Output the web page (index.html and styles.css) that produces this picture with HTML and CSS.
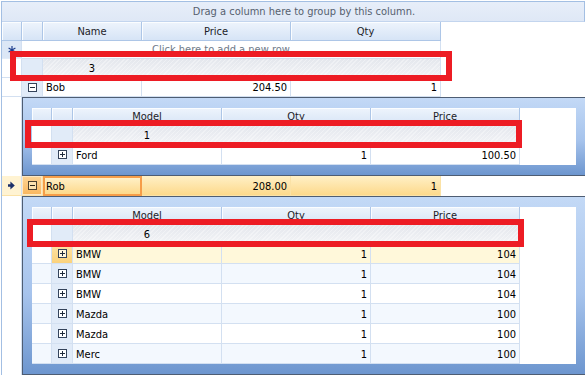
FILE: index.html
```html
<!DOCTYPE html>
<html>
<head>
<meta charset="utf-8">
<link rel="stylesheet" href="styles.css">
</head>
<body>
<div class="page">
  <div class="grid">
    <div class="group-panel">Drag a column here to group by this column.</div>

    <div class="row hrow">
      <div class="c hdr w-ind"></div>
      <div class="c hdr w-exp"></div>
      <div class="c hdr w-name">Name</div>
      <div class="c hdr w-price">Price</div>
      <div class="c hdr w-qty">Qty</div>
    </div>

    <div class="row newrow">
      <div class="c w-ind newind">
        <svg width="8" height="8" viewBox="0 0 8 8"><path d="M4 0v8M0.6 2l6.8 4M0.6 6l6.8-4" stroke="#1f3f8f" stroke-width="1.2" fill="none"/></svg>
      </div>
      <div class="c newtext">Click here to add a new row</div>
    </div>

    <div class="row mgrow">
      <div class="c w-ind"></div>
      <div class="c w-exp expbg"></div>
      <div class="c hatch w-mhatch"><span class="gval w-gname">3</span></div>
    </div>

    <div class="row drow">
      <div class="c w-ind"></div>
      <div class="c w-exp expbg"><svg class="ebox" width="9" height="9" viewBox="0 0 9 9"><rect x="0.5" y="0.5" width="8" height="8" fill="#fff" stroke="#34435a"/><path d="M2 4.5h5" stroke="#1f2b3c"/></svg></div>
      <div class="c w-name txt">Bob</div>
      <div class="c w-price num">204.50</div>
      <div class="c w-qty num">1</div>
    </div>

    <div class="detail">
      <div class="ind-col"></div>
      <div class="frame">
        <div class="panel">
          <div class="row ihrow">
            <div class="c hdr w-ind"></div>
            <div class="c hdr w-exp"></div>
            <div class="c hdr w-col">Model</div>
            <div class="c hdr w-col">Qty</div>
            <div class="c hdr w-col">Price</div>
          </div>
          <div class="row igrow">
            <div class="c w-ind"></div>
            <div class="c w-exp expbg"></div>
            <div class="c hatch w-ihatch"><span class="gval w-gcol">1</span></div>
          </div>
          <div class="row irow">
            <div class="c w-ind"></div>
            <div class="c w-exp expbg"><svg width="9" height="9" viewBox="0 0 9 9"><rect x="0.5" y="0.5" width="8" height="8" fill="#fff" stroke="#34435a"/><path d="M2 4.5h5M4.5 2v5" stroke="#1f2b3c"/></svg></div>
            <div class="c w-col txt">Ford</div>
            <div class="c w-col num">1</div>
            <div class="c w-col num">100.50</div>
          </div>
        </div>
      </div>
    </div>

    <div class="row drow sel">
      <div class="c w-ind selind">
        <svg width="7" height="9" viewBox="0 0 7 9"><path d="M0 3.3h2.4V0.6L6.8 4.5 2.4 8.4V5.7H0z" fill="#1b2f6a"/></svg>
      </div>
      <div class="c w-exp selexp"><svg width="9" height="9" viewBox="0 0 9 9"><rect x="0.5" y="0.5" width="8" height="8" fill="#fde3b0" stroke="#4a4030"/><path d="M2 4.5h5" stroke="#2b2418"/></svg></div>
      <div class="c w-name txt selname">Rob</div>
      <div class="c w-price num">208.00</div>
      <div class="c w-qty num">1</div>
    </div>

    <div class="detail">
      <div class="ind-col"></div>
      <div class="frame">
        <div class="panel">
          <div class="row ihrow">
            <div class="c hdr w-ind"></div>
            <div class="c hdr w-exp"></div>
            <div class="c hdr w-col">Model</div>
            <div class="c hdr w-col">Qty</div>
            <div class="c hdr w-col">Price</div>
          </div>
          <div class="row igrow">
            <div class="c w-ind"></div>
            <div class="c w-exp expbg"></div>
            <div class="c hatch w-ihatch"><span class="gval w-gcol">6</span></div>
          </div>
          <div class="row irow hot">
            <div class="c w-ind"></div>
            <div class="c w-exp hotexp"><svg width="9" height="9" viewBox="0 0 9 9"><rect x="0.5" y="0.5" width="8" height="8" fill="#fff6dc" stroke="#34435a"/><path d="M2 4.5h5M4.5 2v5" stroke="#1f2b3c"/></svg></div>
            <div class="c w-col txt">BMW</div>
            <div class="c w-col num">1</div>
            <div class="c w-col num">104</div>
          </div>
          <div class="row irow alt">
            <div class="c w-ind"></div>
            <div class="c w-exp expbg"><svg width="9" height="9" viewBox="0 0 9 9"><rect x="0.5" y="0.5" width="8" height="8" fill="#fff" stroke="#34435a"/><path d="M2 4.5h5M4.5 2v5" stroke="#1f2b3c"/></svg></div>
            <div class="c w-col txt">BMW</div>
            <div class="c w-col num">1</div>
            <div class="c w-col num">104</div>
          </div>
          <div class="row irow">
            <div class="c w-ind"></div>
            <div class="c w-exp expbg"><svg width="9" height="9" viewBox="0 0 9 9"><rect x="0.5" y="0.5" width="8" height="8" fill="#fff" stroke="#34435a"/><path d="M2 4.5h5M4.5 2v5" stroke="#1f2b3c"/></svg></div>
            <div class="c w-col txt">BMW</div>
            <div class="c w-col num">1</div>
            <div class="c w-col num">104</div>
          </div>
          <div class="row irow alt">
            <div class="c w-ind"></div>
            <div class="c w-exp expbg"><svg width="9" height="9" viewBox="0 0 9 9"><rect x="0.5" y="0.5" width="8" height="8" fill="#fff" stroke="#34435a"/><path d="M2 4.5h5M4.5 2v5" stroke="#1f2b3c"/></svg></div>
            <div class="c w-col txt">Mazda</div>
            <div class="c w-col num">1</div>
            <div class="c w-col num">100</div>
          </div>
          <div class="row irow">
            <div class="c w-ind"></div>
            <div class="c w-exp expbg"><svg width="9" height="9" viewBox="0 0 9 9"><rect x="0.5" y="0.5" width="8" height="8" fill="#fff" stroke="#34435a"/><path d="M2 4.5h5M4.5 2v5" stroke="#1f2b3c"/></svg></div>
            <div class="c w-col txt">Mazda</div>
            <div class="c w-col num">1</div>
            <div class="c w-col num">100</div>
          </div>
          <div class="row irow alt">
            <div class="c w-ind"></div>
            <div class="c w-exp expbg"><svg width="9" height="9" viewBox="0 0 9 9"><rect x="0.5" y="0.5" width="8" height="8" fill="#fff" stroke="#34435a"/><path d="M2 4.5h5M4.5 2v5" stroke="#1f2b3c"/></svg></div>
            <div class="c w-col txt">Merc</div>
            <div class="c w-col num">1</div>
            <div class="c w-col num">100</div>
          </div>
        </div>
      </div>
    </div>
  </div>
</div>

<div class="mark mark-1"></div>
<div class="mark mark-2"></div>
<div class="mark mark-3"></div>
</body>
</html>
```

FILE: styles.css
```css
html, body {
  margin: 0;
  padding: 0;
}

body {
  width: 585px;
  height: 375px;
  overflow: hidden;
  position: relative;
  background: #fff;
  font-family: "DejaVu Sans Condensed", "DejaVu Sans", sans-serif;
  font-size: 11px;
  color: #000;
}

.page {
  padding: 1px 0 0 1px;
}

.grid {
  border-left: 1px solid #a3bfe3;
  border-top: 1px solid #a3bfe3;
}

.group-panel {
  height: 20px;
  box-sizing: border-box;
  border-right: 1px solid #a3bfe3;
  border-bottom: 1px solid #c3d5ee;
  background: linear-gradient(#e7eef9, #dfe8f6);
  color: #56616f;
  display: flex;
  align-items: center;
  justify-content: center;
  padding-left: 22px;
}

.row {
  display: flex;
}

.c {
  box-sizing: border-box;
  flex: none;
  display: flex;
  align-items: center;
  border-right: 1px solid #d3e0f1;
  border-bottom: 1px solid #d3e0f1;
  white-space: nowrap;
}

.w-ind { width: 20px; justify-content: center; }
.w-exp { width: 21px; justify-content: center; }
.w-name { width: 99px; }
.w-price { width: 149px; }
.w-qty { width: 150px; }
.w-col { width: 149px; }
.w-mhatch { width: 398px; }
.w-ihatch { width: 447px; }
.w-gname { width: 98px; }
.w-gcol { width: 148px; }

.hrow { height: 19px; }
.newrow { height: 18px; }
.mgrow { height: 19px; }
.drow { height: 19px; }
.ihrow { height: 18px; }
.igrow { height: 19px; }
.irow { height: 20px; }

.drow .txt,
.drow .num,
.irow .txt,
.irow .num {
  padding-top: 1px;
}

.hdr {
  justify-content: center;
  background: linear-gradient(#eef4fc, #d6e4f6);
  border-right: 1px solid #adc6e7;
  border-bottom: 1px solid #adc6e7;
  box-shadow: inset 1px 1px 0 #fbfdff;
  color: #1c1c28;
}

.newind {
  background: #dce7f6;
  border-bottom-color: #e3ecf8;
}

.newtext {
  width: 419px;
  justify-content: center;
  padding-right: 20px;
  color: #6f7a88;
}

.expbg {
  background: #e1ebf8;
}

.hatch {
  background:
    repeating-linear-gradient(135deg, rgba(255,255,255,0.35) 0 1px, transparent 1px 3px),
    linear-gradient(#e4e7ed, #f2f3f6);
}

.gval {
  text-align: center;
}

.txt {
  padding-left: 3px;
}

.num {
  justify-content: flex-end;
  padding-right: 3px;
}

.detail {
  display: flex;
}

.ind-col {
  width: 20px;
  flex: none;
  box-sizing: border-box;
  border-right: 1px solid #d3e0f1;
}

.frame {
  flex: 1;
  border-top: 1px solid #4e5d73;
  border-left: 1px solid #4e5d73;
  border-bottom: 1px solid #4e5d73;
  padding: 10px 9px;
  background: linear-gradient(#c3d9f6, #a6c3ec 55%, #6d96cf);
}

.panel {
  background: #fff;
}

.sel {
  height: 20px;
}

.sel .c {
  background: linear-gradient(#fff0c6, #fdd98b);
  border-right-color: #fbe2a6;
  border-bottom-color: #fbe2a6;
}

.sel .selind {
  background: #fff3d2;
  border-right-color: #d3e0f1;
}

.sel .selexp {
  background: linear-gradient(#fcd597, #f9b65e);
  box-shadow: inset 0 0 0 1px #fde8c4;
}

.sel .selname {
  border: 2px solid #f69d49;
  padding-left: 1px;
}

.hot .c {
  background: #fff8da;
}

.hot .w-ind {
  background: #fff;
}

.hot .hotexp {
  background: linear-gradient(#fde4a6, #fbd27c);
}

.alt .c {
  background: #f3f8fe;
}

.alt .expbg {
  background: #e1ebf8;
}

.mark {
  position: absolute;
  box-sizing: border-box;
  border: 6px solid #ed1c24;
}

.mark-1 { left: 10px; top: 51px; width: 442px; height: 30px; }
.mark-2 { left: 25px; top: 120px; width: 497px; height: 28px; }
.mark-3 { left: 27px; top: 219px; width: 497px; height: 28px; }
```
